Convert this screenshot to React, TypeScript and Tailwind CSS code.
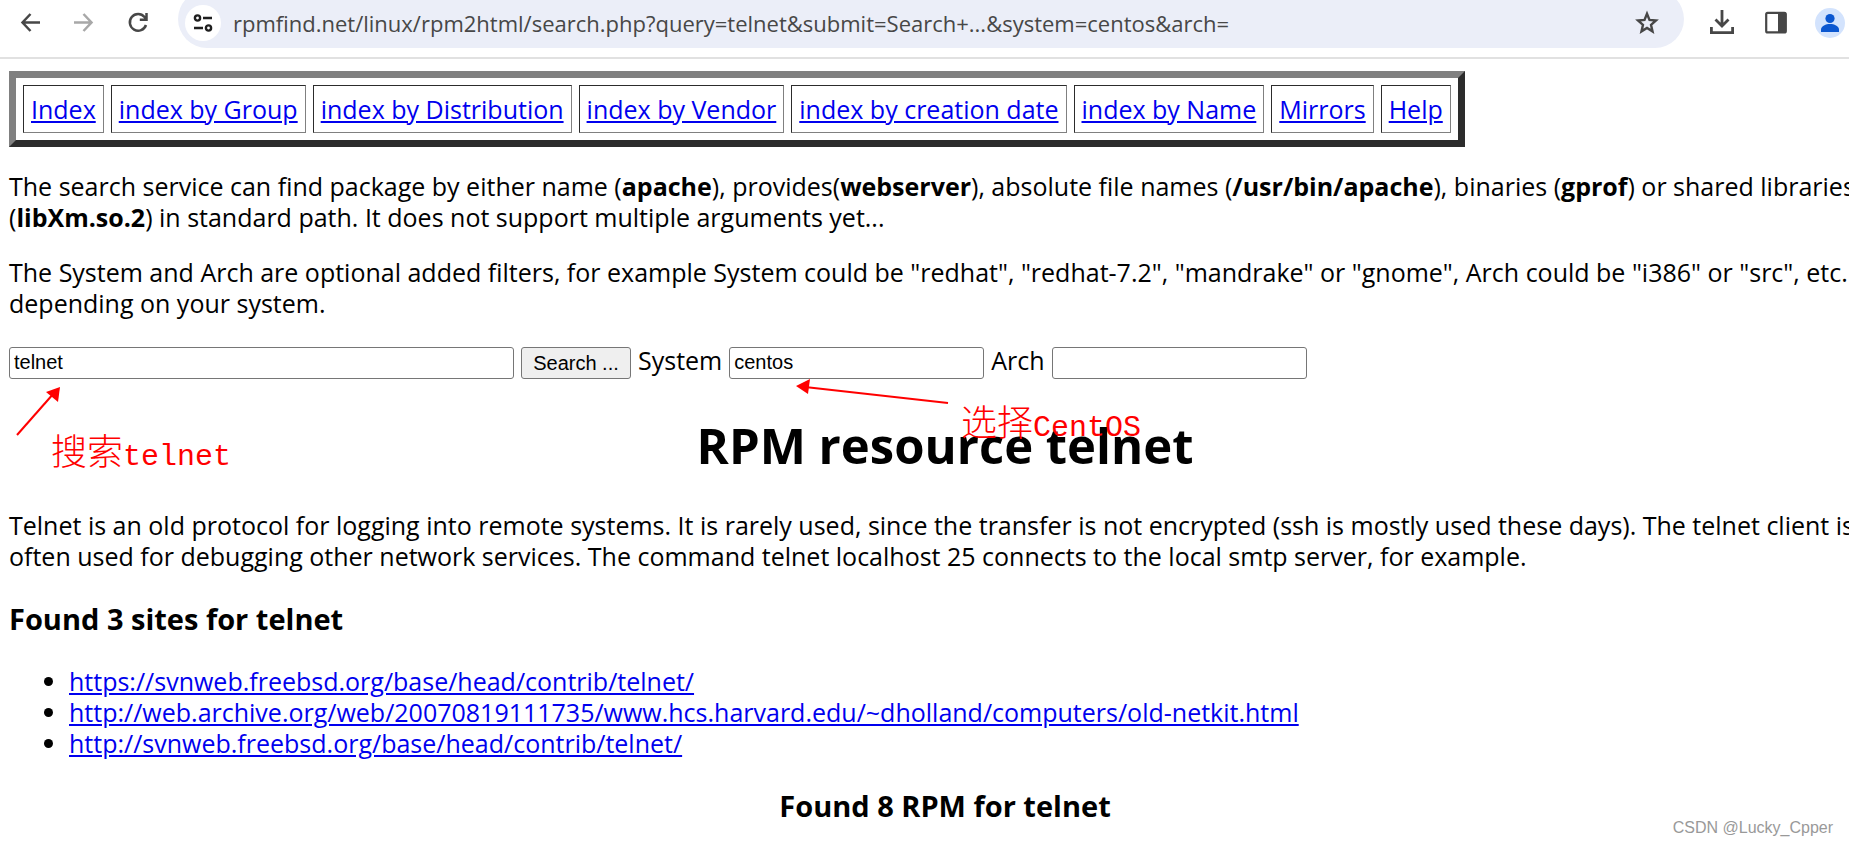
const navLinks = [
  'Index',
  'index by Group',
  'index by Distribution',
  'index by Vendor',
  'index by creation date',
  'index by Name',
  'Mirrors',
  'Help',
];

const sites = [
  'https://svnweb.freebsd.org/base/head/contrib/telnet/',
  'http://web.archive.org/web/20070819111735/www.hcs.harvard.edu/~dholland/computers/old-netkit.html',
  'http://svnweb.freebsd.org/base/head/contrib/telnet/',
];

export default function App() {
  return (
    <div className="relative min-h-screen overflow-hidden bg-white text-black font-['Open_Sans',sans-serif]">
      <Toolbar />
      {/* The page runs a little past the right edge of the window */}
      <main className="-mr-8 pl-[9px] pt-3 text-[25px] leading-[31px]">
        <NavTable />
        <p className="mt-6">
          The search service can find package by either name (<b>apache</b>), provides(<b>webserver</b>), absolute file
          names (<b>/usr/bin/apache</b>), binaries (<b>gprof</b>) or shared libraries
          <br />(<b>libXm.so.2</b>) in standard path. It does not support multiple arguments yet...
        </p>
        <p className="mt-6">
          The System and Arch are optional added filters, for example System could be "redhat", "redhat-7.2", "mandrake"
          or "gnome", Arch could be "i386" or "src", etc.
          <br />
          depending on your system.
        </p>
        <SearchForm />
        <h1 className="mt-8 text-center text-[49px] leading-[66px] font-bold">RPM resource telnet</h1>
        <p className="mt-8">
          Telnet is an old protocol for logging into remote systems. It is rarely used, since the transfer is not
          encrypted (ssh is mostly used these days). The telnet client is
          <br />
          often used for debugging other network services. The command telnet localhost 25 connects to the local smtp
          server, for example.
        </p>
        <h3 className="mt-7 text-[29px] leading-[38px] font-bold">Found 3 sites for telnet</h3>
        <ul className="mt-7 list-disc pl-[60px]">
          {sites.map((url) => (
            <li key={url}>
              <a href={url} className="text-[#0000ee] underline">
                {url}
              </a>
            </li>
          ))}
        </ul>
        <h3 className="mt-7 text-center text-[29px] leading-[38px] font-bold">Found 8 RPM for telnet</h3>
      </main>
      <Annotations />
      <p className="absolute right-4 bottom-2 font-['Liberation_Sans',sans-serif] text-[16px] leading-5 text-[#999999]">
        CSDN @Lucky_Cpper
      </p>
    </div>
  );
}

function Toolbar() {
  return (
    <header className="flex h-[59px] items-start border-b-2 border-[#e1e1e1] pl-[18px] text-[#474747]">
      <button aria-label="Back" className="mt-2.5">
        <svg width="24" height="24" viewBox="0 0 24 24" fill="none" stroke="currentColor" strokeWidth="2.5">
          <path d="M22 12.500H4.500M12.500 4L4.500 12.500l8 8.500" />
        </svg>
      </button>
      <button aria-label="Forward" className="mt-2.5 ml-[30px] text-[#a8a8a8]">
        <svg width="24" height="24" viewBox="0 0 24 24" fill="none" stroke="currentColor" strokeWidth="2.5">
          <path d="M2 12.500h17.500M11.500 4L19.500 12.500l-8 8.500" />
        </svg>
      </button>
      <button aria-label="Reload" className="mt-2.5 ml-[30px]">
        <svg width="24" height="24" viewBox="0 0 24 24" fill="none" stroke="currentColor" strokeWidth="2.5">
          <path d="M20 15A8.300 8.300 0 1 1 18.500 7L20 9M20.500 3v6.700h-6.700" />
        </svg>
      </button>
      <div className="-mt-[10px] ml-7 flex h-[58px] flex-1 items-center rounded-full bg-[#ebeef8] pt-2 pr-6 pl-[7px]">
        <button aria-label="Site information" className="flex h-9 w-9 items-center justify-center rounded-full bg-white">
          <svg width="20" height="20" viewBox="0 0 20 20" fill="none" stroke="#1f1f1f" strokeWidth="2.400">
            <circle cx="4.500" cy="5" r="2.600" />
            <path d="M10 5h9M1 15h9" />
            <circle cx="15.500" cy="15" r="2.600" />
          </svg>
        </button>
        <input
          aria-label="Address"
          className="ml-3 flex-1 bg-transparent text-[22px] leading-8 outline-none"
          defaultValue="rpmfind.net/linux/rpm2html/search.php?query=telnet&submit=Search+...&system=centos&arch="
        />
        <button aria-label="Bookmark">
          <svg width="26" height="26" viewBox="0 0 24 24" fill="none" stroke="currentColor" strokeWidth="2.200">
            <path d="M12 3.500l2.300 5.700 6 .500-4.600 4 1.400 6L12 16.500l-5.100 3.200 1.400-6-4.600-4 6-.500z" />
          </svg>
        </button>
      </div>
      <button aria-label="Downloads" className="mt-2.5 ml-[26px]">
        <svg width="24" height="24" viewBox="0 0 24 24" fill="none" stroke="currentColor" strokeWidth="2.800">
          <path d="M12 0v15M5.500 9.500l6.500 6.500 6.500-6.500M1.400 17v5.600h21.200V17" />
        </svg>
      </button>
      <button aria-label="Side panel" className="mt-2.5 ml-[30px]">
        <svg width="24" height="24" viewBox="0 0 24 24" fill="none" stroke="currentColor" strokeWidth="2.200">
          <rect x="2.200" y="2.800" width="19.600" height="19.600" rx="1.500" />
          <path d="M14 2.500h8v20h-8z" fill="currentColor" stroke="none" />
        </svg>
      </button>
      <button aria-label="Profile" className="mt-2 mr-1 ml-[27px]">
        <svg width="30" height="30" viewBox="0 0 30 30">
          <circle cx="15" cy="15" r="15" fill="#d3e3fd" />
          <circle cx="15" cy="10.500" r="4.600" fill="#0b57d0" />
          <path d="M6 24v-2.500c0-3.500 5-5.500 9-5.500s9 2 9 5.500V24z" fill="#0b57d0" />
        </svg>
      </button>
    </header>
  );
}

function NavTable() {
  return (
    <table className="border-separate border-spacing-[7px] border-7 border-t-[#808080] border-r-[#2c2c2c] border-b-[#2c2c2c] border-l-[#808080]">
      <tbody>
        <tr>
          {navLinks.map((label) => (
            <td
              key={label}
              className="h-12 border border-t-[#2c2c2c] border-r-[#808080] border-b-[#808080] border-l-[#2c2c2c] px-[7px] whitespace-nowrap"
            >
              <a href="#" className="text-[#0000ee] underline">
                {label}
              </a>
            </td>
          ))}
        </tr>
      </tbody>
    </table>
  );
}

function SearchForm() {
  const field = "h-8 rounded-[3px] border border-[#767676] px-1 font-['Liberation_Sans',sans-serif] text-[20px] leading-6";

  return (
    <form className="mt-[26px] flex items-center" onSubmit={(e) => e.preventDefault()}>
      <input aria-label="Query" defaultValue="telnet" className={`${field} w-[505px]`} />
      <button className="ml-[7px] h-8 w-[110px] rounded-[3px] border border-[#767676] bg-[#efefef] font-['Liberation_Sans',sans-serif] text-[20px] leading-6">
        Search ...
      </button>
      <label htmlFor="system" className="ml-[7px] pb-1">
        System
      </label>
      <input id="system" defaultValue="centos" className={`${field} ml-[7px] w-[255px]`} />
      <label htmlFor="arch" className="ml-[7px] pb-1">
        Arch
      </label>
      <input id="arch" className={`${field} ml-[7px] w-[255px]`} />
    </form>
  );
}

/* Red notes drawn on top of the page */
function Annotations() {
  return (
    <div className="pointer-events-none absolute inset-0 font-['Liberation_Mono','Noto_Sans_CJK_SC',monospace] text-[30px] leading-10 text-[#ff0000]">
      <svg className="absolute top-[380px] left-4" width="50" height="60" viewBox="0 0 50 60" fill="#ff0000">
        <path d="M1 55L38 13" stroke="#ff0000" strokeWidth="2" />
        <path d="M44 7L30 12L42 22z" />
      </svg>
      <svg className="absolute top-[370px] left-[790px]" width="170" height="40" viewBox="0 0 170 40" fill="#ff0000">
        <path d="M15 17L158 33" stroke="#ff0000" strokeWidth="2" />
        <path d="M6 16L20 9L18 24z" />
      </svg>
      <p className="absolute top-[436px] left-[51px]">
        <span className="text-[36px] font-light">搜索</span>telnet
      </p>
      <p className="absolute top-[407px] left-[961px]">
        <span className="text-[36px] font-light">选择</span>CentOS
      </p>
    </div>
  );
}
